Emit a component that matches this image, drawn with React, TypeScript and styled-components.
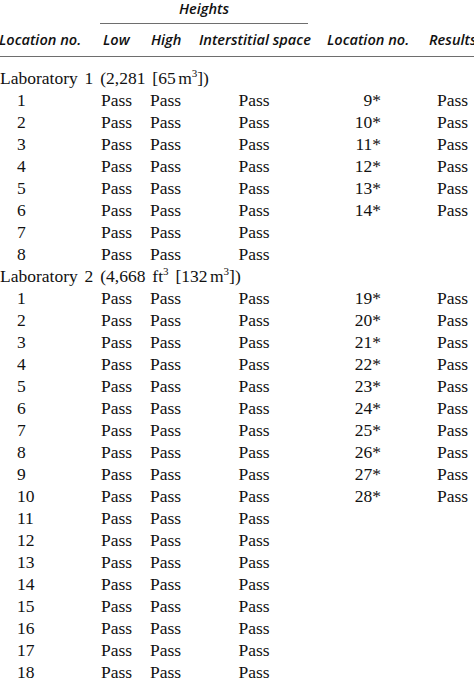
import React from "react";
import styled, { createGlobalStyle } from "styled-components";

const Global = createGlobalStyle`
  html, body { margin: 0; padding: 0; background: #ffffff; }
  body { overflow: hidden; }
`;

const Page = styled.div`
  width: 474px;
  height: 681px;
  overflow: hidden;
  background: #ffffff;
  color: #111111;
`;

const Table = styled.div`
  width: 480px;
  margin-left: -1px;
  display: grid;
  grid-template-columns: 101px 49px 50px 110px 111px 60px;
`;

const HeadFont = styled.div`
  font-family: "Open Sans", "Noto Sans", sans-serif;
  font-style: italic;
  font-weight: 600;
  font-size: 14.6px;
  color: #111111;
  white-space: nowrap;
`;

const GroupHead = styled(HeadFont)`
  grid-column: 2 / 5;
  text-align: center;
  height: 23px;
  line-height: 17px;
  border-bottom: 1px solid #6e6e6e;
  margin-right: 1px;
`;

const Spacer = styled.div<{ $span: string }>`
  grid-column: ${(p) => p.$span};
`;

const ColHead = styled(HeadFont)<{ $align?: string; $pad?: string }>`
  height: 32px;
  line-height: 31px;
  text-align: ${(p) => p.$align || "left"};
  padding: ${(p) => p.$pad || "0"};
  border-bottom: 1px solid #6e6e6e;
`;

const Gap = styled.div`
  grid-column: 1 / -1;
  height: 10px;
`;

const Cell = styled.div<{ $align?: string; $pad?: string }>`
  font-family: "Liberation Serif", "Times New Roman", serif;
  font-size: 17.5px;
  height: 22px;
  line-height: 22px;
  white-space: nowrap;
  text-align: ${(p) => p.$align || "left"};
  padding: ${(p) => p.$pad || "0"};
`;

const GroupLabel = styled(Cell)`
  grid-column: 1 / -1;
  padding-left: 1px;
  word-spacing: 2.5px;
`;

const Sup = styled.sup`
  font-size: 11px;
  line-height: 0;
  vertical-align: 7px;
`;

const Thin = styled.span`
  font-size: 10px;
  word-spacing: 0;
`;

type Row = { n: number; right?: string };

const lab1: Row[] = Array.from({ length: 8 }, (_, i) => ({
  n: i + 1,
  right: i < 6 ? `${i + 9}*` : undefined,
}));
const lab2: Row[] = Array.from({ length: 18 }, (_, i) => ({
  n: i + 1,
  right: i < 10 ? `${i + 19}*` : undefined,
}));

const DataRow: React.FC<{ row: Row }> = ({ row }) => (
  <>
    <Cell $pad="0 0 0 18px">{row.n}</Cell>
    <Cell $pad="0 0 0 1px">Pass</Cell>
    <Cell $pad="0 0 0 1px">Pass</Cell>
    <Cell $align="center">Pass</Cell>
    <Cell $align="right" $pad="0 39px 0 0">{row.right ?? ""}</Cell>
    <Cell $pad="0 0 0 17px">{row.right ? "Pass" : ""}</Cell>
  </>
);

export default function App() {
  return (
    <Page>
      <Global />
      <Table>
        <Spacer $span="1 / 2" />
        <GroupHead>Heights</GroupHead>
        <Spacer $span="5 / 7" />

        <ColHead>Location no.</ColHead>
        <ColHead $pad="0 0 0 3px">Low</ColHead>
        <ColHead $pad="0 0 0 2px">High</ColHead>
        <ColHead $align="right" $pad="0 0 0 0">Interstitial space</ColHead>
        <ColHead $pad="0 0 0 18px">Location no.</ColHead>
        <ColHead $pad="0 0 0 9px">Results</ColHead>

        <Gap />
        <GroupLabel>
          Laboratory 1 (2,281 [65<Thin> </Thin>m<Sup>3</Sup>])
        </GroupLabel>
        {lab1.map((r) => (
          <DataRow key={`a${r.n}`} row={r} />
        ))}
        <GroupLabel>
          Laboratory 2 (4,668 ft<Sup>3</Sup> [132<Thin> </Thin>m<Sup>3</Sup>])
        </GroupLabel>
        {lab2.map((r) => (
          <DataRow key={`b${r.n}`} row={r} />
        ))}
      </Table>
    </Page>
  );
}
